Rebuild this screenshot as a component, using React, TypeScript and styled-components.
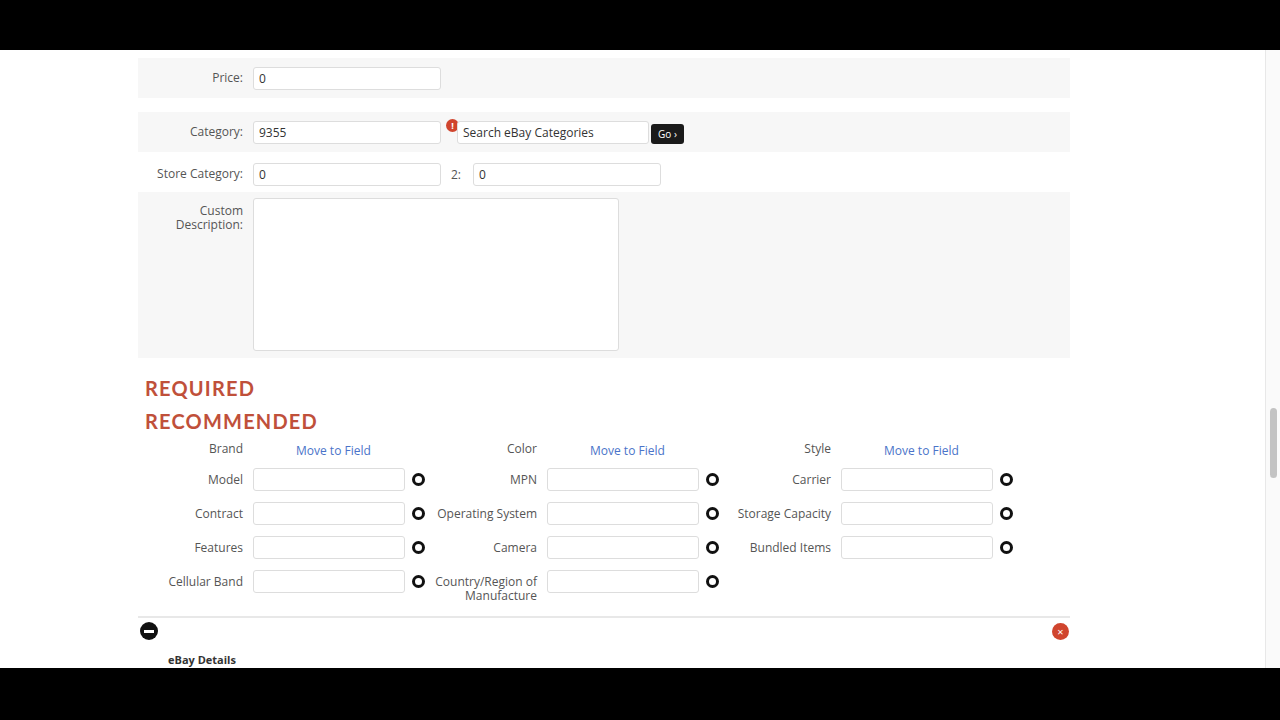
import React from "react";
import styled, { createGlobalStyle } from "styled-components";

const Global = createGlobalStyle`
  html,body{margin:0;padding:0;background:#000;}
  body{font-family:"Open Sans","Liberation Sans",sans-serif;font-size:12px;color:#555;}
`;
const Frame = styled.div`width:1280px;height:720px;display:flex;flex-direction:column;overflow:hidden;`;
const Bar = styled.div<{ h: number }>`height:${p => p.h}px;background:#000;flex:none;`;
const Screen = styled.div`height:618px;background:#fff;display:flex;flex:none;`;
const Content = styled.div`flex:1;padding:8px 0 0 138px;overflow:hidden;`;
const Scroll = styled.div`width:14px;background:#fafafa;border-left:1px solid #e8e8e8;display:flex;flex-direction:column;`;
const Thumb = styled.div`margin:358px 3px 0 4px;height:70px;border-radius:4px;background:#c3c3c3;`;
const Panel = styled.div`width:932px;`;
const Row = styled.div<{ bg?: boolean; h: number; mt?: number; align?: string }>`
  height:${p => p.h}px;margin-top:${p => p.mt || 0}px;background:${p => (p.bg ? "#f7f7f7" : "#fff")};
  display:flex;align-items:${p => p.align || "center"};gap:10px;
`;
const Label = styled.div<{ top?: number }>`width:105px;text-align:right;font-size:12px;color:#555;line-height:14px;padding-top:${p => p.top || 0}px;`;
const Input = styled.div<{ w: number; h?: number }>`
  width:${p => p.w}px;height:${p => p.h || 23}px;box-sizing:border-box;background:#fff;
  border:1px solid #ddd;border-radius:3px;padding:3px 5px;font-size:12px;color:#333;line-height:15px;flex:none;
`;
const Err = styled.span`width:13px;height:13px;border-radius:50%;background:#d0452e;color:#fff;font-size:9px;font-weight:bold;display:inline-flex;align-items:center;justify-content:center;margin:-14px -12px 0 -5px;`;
const Go = styled.div`background:#1a1a1a;color:#fff;font-size:10px;padding:3px 7px;border-radius:3px;margin-left:-8px;margin-top:4px;`;
const Heading = styled.div<{ mt: number }>`font-family:"Lato","Liberation Sans",sans-serif;font-weight:700;color:#c0503a;font-size:20px;letter-spacing:1.2px;margin:${p => p.mt}px 0 0 7px;line-height:22px;`;
const Grid = styled.div`display:grid;grid-template-columns:repeat(3,294px);margin-top:8px;`;
const Cell = styled.div<{ h: number }>`display:flex;align-items:flex-start;height:${p => p.h}px;gap:0;`;
const GLabel = styled.div`width:105px;text-align:right;font-size:12px;color:#555;line-height:14px;padding-top:5px;`;
const Link = styled.div`color:#4a74c9;font-size:12px;margin-left:53px;padding-top:2px;`;
const Plus = styled.div`width:13px;height:13px;box-sizing:border-box;border-radius:50%;border:3.5px solid #111;margin:5px 0 0 7px;`;
const Divider = styled.div`border-top:2px solid #e8e8e8;height:26px;display:flex;justify-content:space-between;align-items:center;padding:0 2px;`;
const Minus = styled.div`width:18px;height:18px;border-radius:50%;background:#111;display:flex;align-items:center;justify-content:center;&::after{content:"";width:10px;height:3px;background:#fff;}`;
const Close = styled.div`width:17px;height:17px;border-radius:50%;background:#d0452e;color:#fff;font-size:11px;display:flex;align-items:center;justify-content:center;margin-right:-1px;`;
const Details = styled.div`font-weight:700;color:#333;font-size:11px;margin:8px 0 0 30px;`;

const cols = [
  ["Brand", "Model", "Contract", "Features", "Cellular Band"],
  ["Color", "MPN", "Operating System", "Camera", "Country/Region of Manufacture"],
  ["Style", "Carrier", "Storage Capacity", "Bundled Items", ""],
];
const heights = [28, 34, 34, 34, 46];

export default function App() {
  const cells: React.ReactNode[] = [];
  for (let r = 0; r < 5; r++)
    for (let c = 0; c < 3; c++) {
      const name = cols[c][r];
      cells.push(
        <Cell key={r + "-" + c} h={heights[r]}>
          {r === 0 ? (
            <><GLabel style={{ paddingTop: 2 }}>{name}</GLabel><Link>Move to Field</Link></>
          ) : name ? (
            <><GLabel>{name}</GLabel><Input w={152} style={{ marginLeft: 10 }} /><Plus /></>
          ) : null}
        </Cell>
      );
    }
  return (
    <Frame>
      <Global />
      <Bar h={50} />
      <Screen>
        <Content>
          <Panel>
            <Row bg h={40}><Label>Price:</Label><Input w={188}>0</Input></Row>
            <Row bg h={40} mt={14}>
              <Label>Category:</Label><Input w={188}>9355</Input><Err>!</Err>
              <Input w={192}>Search eBay Categories</Input><Go>Go ›</Go>
            </Row>
            <Row h={36} mt={4}>
              <Label>Store Category:</Label><Input w={188}>0</Input>
              <span style={{ color: "#555" }}>2:</span><Input w={188} style={{ marginLeft: 2 }}>0</Input>
            </Row>
            <Row bg h={166} align="flex-start">
              <Label top={12}>Custom Description:</Label>
              <Input w={366} h={153} style={{ marginTop: 6 }} />
            </Row>
            <Heading mt={19}>REQUIRED</Heading>
            <Heading mt={11}>RECOMMENDED</Heading>
            <Grid>{cells}</Grid>
            <Divider><Minus /><Close>×</Close></Divider>
            <Details>eBay Details</Details>
          </Panel>
        </Content>
        <Scroll><Thumb /></Scroll>
      </Screen>
      <Bar h={52} />
    </Frame>
  );
}
